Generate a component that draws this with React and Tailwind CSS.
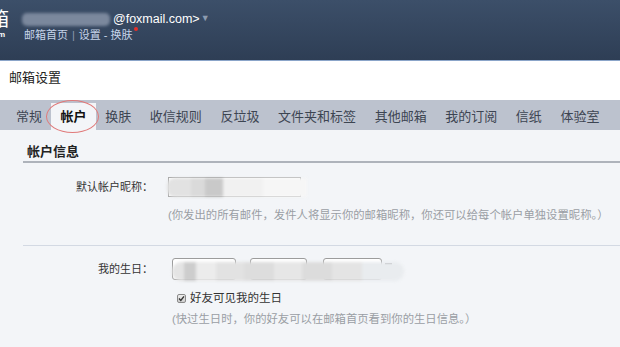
import React from "react";

const tabs = ["常规", "帐户", "换肤", "收信规则", "反垃圾", "文件夹和标签", "其他邮箱", "我的订阅", "信纸", "体验室"];

function Header() {
    return (
        <div className="h-[61px] bg-gradient-to-b from-[#3c4f69] to-[#2e3e55] border-b border-[#8ba5c9] flex">
            <div className="w-[9px] overflow-hidden flex justify-end">
                <div className="shrink-0 flex flex-col items-end pt-[9px] text-white">
                    <div className="text-[19px] leading-[22px] whitespace-nowrap">邮箱</div>
                    <div className="mr-[4px] text-[8px] leading-[8px] font-bold whitespace-nowrap">.com</div>
                </div>
            </div>
            <div className="ml-[13px] pt-[11px]">
                <div className="flex items-center h-[16px]">
                    <div className="w-[88px] h-[13px] rounded-[5px] bg-[#7b889d] blur-[1.5px]"></div>
                    <span className="ml-[3px] text-[12.5px] text-white">@foxmail.com&gt;</span>
                    <span className="ml-[1px] text-[9px] text-[#8c9bb0]">▼</span>
                </div>
                <div className="mt-[1px] flex items-center ml-[2px] text-[11px] leading-[14px] text-[#c6d4ea]">
                    <span>邮箱首页</span>
                    <span className="mx-[4px] text-[#8c9bb0]">|</span>
                    <span>设置</span>
                    <span className="mx-[3px]">-</span>
                    <span className="relative">
                        换肤
                        <span className="absolute -right-[5px] -top-[1px] w-[4px] h-[4px] rounded-full bg-[#e5302a]"></span>
                    </span>
                </div>
            </div>
        </div>
    );
}

function Tabs() {
    return (
        <div className="h-[30px] bg-[#bcc2ce] flex items-end pl-[6.7px]">
            {tabs.map((t, i) => (
                i === 1 ? (
                    <div key={t} className="relative h-[27px] px-[9.3px] flex items-center bg-[#f3f5f8] text-[13px] font-bold text-[#111]">
                        {t}
                        <div className="absolute left-[-5px] top-[-3px] w-[53px] h-[33px] rounded-[50%] border border-[#e07a7a]"></div>
                    </div>
                ) : (
                    <div key={t} className="h-[27px] px-[9.3px] flex items-center text-[13px] text-[#3d4552]">{t}</div>
                )
            ))}
        </div>
    );
}

function CheckBox() {
    return (
        <div className="w-[9px] h-[9px] rounded-[2px] border border-[#8a8a8a] bg-gradient-to-b from-[#eeeeee] to-[#cfcfcf] flex items-center justify-center">
            <svg width="7" height="7" viewBox="0 0 7 7">
                <path d="M1 3.6 L2.8 5.4 L6 1.4" fill="none" stroke="#333" strokeWidth="1.4" />
            </svg>
        </div>
    );
}

export default function App() {
    return (
        <div className="w-[620px] h-[347px] overflow-hidden bg-[#f3f5f8] font-['Liberation_Sans','Noto_Sans_CJK_SC',sans-serif]">
            <Header />
            <div className="h-[39px] bg-white pl-[9px] pt-[8px] text-[13px] leading-[18px] text-[#222]">邮箱设置</div>
            <Tabs />
            <div className="pl-[23px]">
                <div className="pt-[13px] pl-[4px] pb-[1px] border-b-2 border-[#aeb3bb] text-[13px] leading-[17px] font-bold text-[#222]">帐户信息</div>

                <div className="flex mt-[14px]">
                    <div className="w-[130px] text-right text-[11px] leading-[20px] text-[#333]">默认帐户昵称：</div>
                    <div className="ml-[15px]">
                        <div className="relative w-[133px] h-[20px] border border-[#a8a8a8] bg-white">
                            <div className="absolute left-[-2px] top-[0px] w-[140px] h-[19px] flex blur-[1.5px]">
                                <div className="w-[24px] h-full rounded-l-[8px] bg-[#e2e2e2]"></div>
                                <div className="w-[14px] h-full bg-[#dadada]"></div>
                                <div className="w-[18px] h-full bg-[#c9c9c9]"></div>
                                <div className="w-[40px] h-full bg-[#f1f1f1]"></div>
                                <div className="w-[44px] h-full bg-[#f6f6f6]"></div>
                            </div>
                        </div>
                        <div className="mt-[11px] text-[11.35px] leading-[14px] text-[#9a9ea4] whitespace-nowrap">(你发出的所有邮件，发件人将显示你的邮箱昵称，你还可以给每个帐户单独设置昵称。）</div>
                    </div>
                </div>

                <div className="mt-[23px] border-t border-[#d3d9e3]"></div>

                <div className="flex mt-[12px]">
                    <div className="w-[130px] text-right text-[11px] leading-[22px] text-[#333]">我的生日：</div>
                    <div className="ml-[19px]">
                        <div className="relative flex items-center">
                            <div className="w-[64px] h-[22px] rounded-[3px] border border-[#9c9c9c] bg-white"></div>
                            <div className="ml-[14px] w-[57px] h-[22px] rounded-[3px] border border-[#9c9c9c] bg-white"></div>
                            <div className="ml-[16px] w-[59px] h-[22px] rounded-[3px] border border-[#9c9c9c] bg-white"></div>
                            <div className="ml-[3px] w-[7px] h-[2px] bg-[#444] self-start mt-[5px]"></div>
                            <div className="absolute left-[0px] top-[4px] w-[232px] h-[19px] flex blur-[1.5px]">
                                <div className="w-[12px] h-full rounded-l-[9px] bg-[#e4e4e4]"></div>
                                <div className="w-[12px] h-full bg-[#cdcdcd]"></div>
                                <div className="w-[20px] h-full bg-[#ececec]"></div>
                                <div className="w-[28px] h-full bg-[#e2e2e2]"></div>
                                <div className="w-[30px] h-full bg-[#dddddd]"></div>
                                <div className="w-[28px] h-full bg-[#e6e6e6]"></div>
                                <div className="w-[30px] h-full bg-[#dcdcdc]"></div>
                                <div className="w-[30px] h-full bg-[#e4e4e4]"></div>
                                <div className="w-[42px] h-full rounded-r-[9px] bg-[#e9ecef]"></div>
                            </div>
                        </div>
                        <div className="mt-[11px] ml-[5px] flex items-center gap-[4px]">
                            <CheckBox />
                            <span className="text-[11.5px] leading-[14px] text-[#333]">好友可见我的生日</span>
                        </div>
                        <div className="mt-[7px] text-[11.35px] leading-[14px] text-[#9a9ea4] whitespace-nowrap">(快过生日时，你的好友可以在邮箱首页看到你的生日信息。）</div>
                    </div>
                </div>
            </div>
        </div>
    );
}
